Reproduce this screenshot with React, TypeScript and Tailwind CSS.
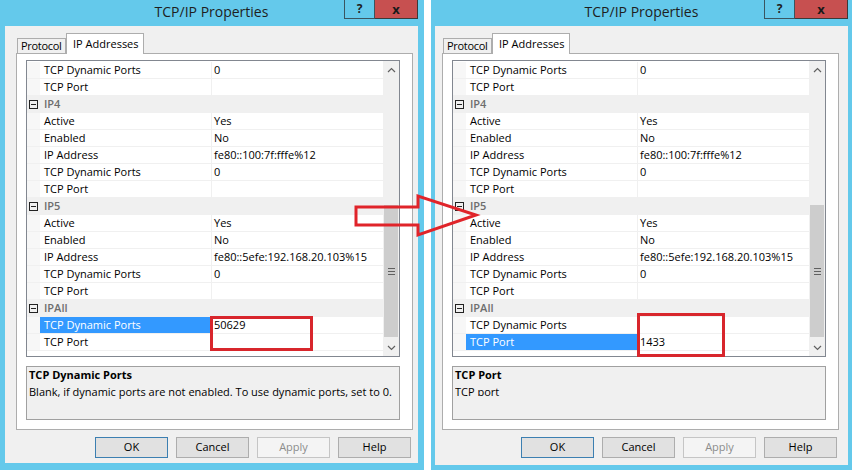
import React from "react";

type Prop = { name: string; value?: string; selected?: boolean };
type Section = { title?: string; items: Prop[] };

function buildSections(side: "left" | "right"): Section[] {
  const left = side === "left";
  return [
    {
      items: [
        { name: "TCP Dynamic Ports", value: "0" },
        { name: "TCP Port" },
      ],
    },
    {
      title: "IP4",
      items: [
        { name: "Active", value: "Yes" },
        { name: "Enabled", value: "No" },
        { name: "IP Address", value: "fe80::100:7f:fffe%12" },
        { name: "TCP Dynamic Ports", value: "0" },
        { name: "TCP Port" },
      ],
    },
    {
      title: "IP5",
      items: [
        { name: "Active", value: "Yes" },
        { name: "Enabled", value: "No" },
        { name: "IP Address", value: "fe80::5efe:192.168.20.103%15" },
        { name: "TCP Dynamic Ports", value: "0" },
        { name: "TCP Port" },
      ],
    },
    {
      title: "IPAll",
      items: [
        { name: "TCP Dynamic Ports", value: left ? "50629" : "", selected: left },
        { name: "TCP Port", value: left ? "" : "1433", selected: !left },
      ],
    },
  ];
}

function Toggle() {
  return (
    <div className="ml-[2px] w-[9px] h-[9px] border border-[#222] flex items-center justify-center">
      <div className="w-[5px] h-px bg-[#222]" />
    </div>
  );
}

function Scrollbar() {
  return (
    <div className="w-[16px] flex flex-col bg-[#f0f0f0]">
      <div className="h-[17px] flex items-center justify-center">
        <svg width="9" height="6" viewBox="0 0 9 6">
          <path d="M1 5 L4.5 1.5 L8 5" fill="none" stroke="#606060" strokeWidth="1.2" />
        </svg>
      </div>
      <div className="flex-1 flex flex-col">
        <div className="h-[127px]" />
        <div className="mx-[1px] h-[132px] bg-[#cdcdcd] flex flex-col items-center justify-center gap-[2px]">
          <div className="w-[7px] h-px bg-[#606060]" />
          <div className="w-[7px] h-px bg-[#606060]" />
          <div className="w-[7px] h-px bg-[#606060]" />
        </div>
      </div>
      <div className="h-[17px] flex items-center justify-center">
        <svg width="9" height="6" viewBox="0 0 9 6">
          <path d="M1 1 L4.5 4.5 L8 1" fill="none" stroke="#606060" strokeWidth="1.2" />
        </svg>
      </div>
    </div>
  );
}

function PropGrid({ side }: { side: "left" | "right" }) {
  const sections = buildSections(side);
  return (
    <div className="w-[374px] h-[297px] border border-[#828790] flex bg-white">
      <div className="w-[356px] pt-[1px] flex flex-col">
        {sections.map((s, i) => (
          <React.Fragment key={i}>
            {s.title && (
              <div className="h-[17px] flex items-center bg-[#f0f0f0]">
                <div className="w-[13px] flex items-center">
                  <Toggle />
                </div>
                <div className="pl-[4px] font-semibold text-[#6d6d6d]">{s.title}</div>
              </div>
            )}
            {s.items.map((p, j) => (
              <div key={j} className="h-[17px] flex border-b border-[#f0f0f0]">
                <div className="w-[13px] bg-[#f7f7f7]" />
                <div
                  className={
                    p.selected
                      ? "w-[171px] pl-[4px] leading-[16px] bg-[#3399ff] text-white"
                      : "w-[171px] pl-[4px] leading-[16px] text-black"
                  }
                >
                  {p.name}
                </div>
                <div className="w-[172px] pl-[2px] leading-[16px] border-l border-[#f0f0f0] text-black">
                  {p.value}
                </div>
              </div>
            ))}
          </React.Fragment>
        ))}
      </div>
      <Scrollbar />
    </div>
  );
}

function DialogButton({ label, kind }: { label: string; kind?: "default" | "disabled" }) {
  const cls =
    kind === "default"
      ? "border-[#3c7fb1] bg-[#e1e1e1] text-black"
      : kind === "disabled"
      ? "border-[#c5c5c5] bg-[#f4f4f4] text-[#8c8c8c]"
      : "border-[#adadad] bg-[#e1e1e1] text-black";
  return (
    <div className={"w-[73px] h-[21px] border flex items-center justify-center " + cls}>{label}</div>
  );
}

function Window({ side }: { side: "left" | "right" }) {
  const left = side === "left";
  return (
    <div
      className={
        left
          ? "w-[424px] h-[470px] flex-none flex flex-col bg-[#64c9eb] pl-[5px] pr-[6px] pb-[7px]"
          : "w-[421px] h-[470px] flex-none flex flex-col bg-[#64c9eb] pl-[4px] pr-[4px] pb-[5px]"
      }
    >
      <div className="relative h-[26px] flex justify-center">
        <div className="text-[14px] leading-[24px] text-[#1e1e1e]">TCP/IP Properties</div>
        <div className="absolute right-0 top-0 flex">
          <div className="w-[31px] h-[19px] border border-t-0 border-[#3a5560] flex items-center justify-center font-bold text-[12px] text-[#1e1e1e]">
            ?
          </div>
          <div
            className={
              (left ? "w-[43px]" : "w-[53px]") +
              " h-[19px] bg-[#c75050] border border-t-0 border-l-0 border-[#3a3a3a] flex items-center justify-center font-bold text-[13px] leading-[17px] text-[#1a1a1a]"
            }
          >
            x
          </div>
        </div>
      </div>
      <div
        className={
          left
            ? "flex-1 bg-[#f0f0f0] pl-[11px] pr-[5px] flex flex-col"
            : "flex-1 bg-[#f0f0f0] pl-[7px] pr-[9px] flex flex-col"
        }
      >
        <div className="h-[27px] flex items-end pl-[1px]">
          <div className="w-[49px] h-[15px] border border-b-0 border-[#adadad] bg-[#f0f0f0] pl-[3px] leading-[14px] tracking-[-0.3px] whitespace-nowrap overflow-hidden">
            Protocol
          </div>
          <div className="relative z-10 -mb-px w-[78px] h-[21px] border border-b-0 border-[#adadad] bg-white pl-[6px] leading-[19px] whitespace-nowrap">
            IP Addresses
          </div>
        </div>
        <div className="w-[397px] h-[377px] border border-[#adadad] bg-white pt-[6px] pl-[9px]">
          <PropGrid side={side} />
          <div className="mt-[9px] w-[374px] h-[54px] border border-[#a0a0a0] bg-[#f0f0f0] px-[2px]">
            <div className="font-bold leading-[16px] text-black">{left ? "TCP Dynamic Ports" : "TCP Port"}</div>
            {left ? (
              <div className="leading-[17px] text-black">
                Blank, if dynamic ports are not enabled. To use dynamic ports, set to 0.
              </div>
            ) : (
              <div className="h-[13px] overflow-hidden leading-[17px] text-black">TCP port</div>
            )}
          </div>
        </div>
        <div className="w-[397px] mt-[7px] flex justify-end gap-[8px] pr-[2px]">
          <DialogButton label="OK" kind="default" />
          <DialogButton label="Cancel" />
          <DialogButton label="Apply" kind="disabled" />
          <DialogButton label="Help" />
        </div>
      </div>
    </div>
  );
}

function Annotations() {
  return (
    <svg className="absolute inset-0 pointer-events-none" width="852" height="470" viewBox="0 0 852 470">
      <rect x="211.5" y="317.5" width="100" height="32" fill="none" stroke="#d8262c" strokeWidth="3" />
      <rect x="638.5" y="314.5" width="85" height="41" fill="none" stroke="#d8262c" strokeWidth="3" />
      <polygon
        points="356,207 418,207 418,196 476,215 418,235 418,225 356,225"
        fill="none"
        stroke="#e0242a"
        strokeWidth="3"
        strokeLinejoin="miter"
      />
    </svg>
  );
}

export default function App() {
  return (
    <div className="relative w-[852px] h-[470px] overflow-hidden bg-white flex gap-[7px] font-['Open_Sans',sans-serif] text-[11px]">
      <Window side="left" />
      <Window side="right" />
      <Annotations />
    </div>
  );
}
